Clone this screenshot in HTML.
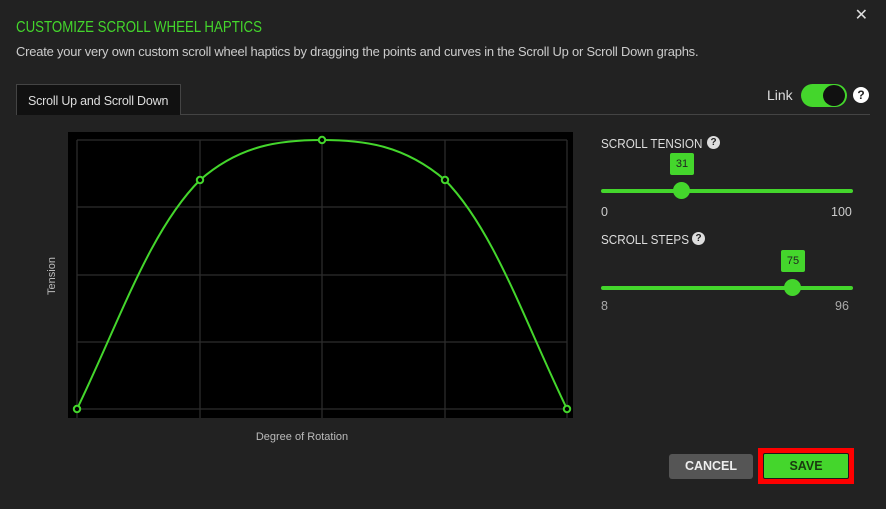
<!DOCTYPE html>
<html><head><meta charset="utf-8"><style>
*{margin:0;padding:0;box-sizing:border-box}
body{width:886px;height:509px;background:#222;font-family:"Liberation Sans",sans-serif;position:relative;overflow:hidden;color:#ccc}
.abs{position:absolute}
.title{left:16px;top:19px;color:#44d62c;font-size:16px;transform:scaleX(0.83);transform-origin:0 0;white-space:nowrap}
.desc{left:16px;top:45px;font-size:12.5px;color:#ccc;letter-spacing:-0.2px;transform:scaleX(1.035);transform-origin:0 0;white-space:nowrap}
.tab{left:16px;top:84px;width:165px;height:31px;background:#111;border:1px solid #444;border-bottom:none;font-size:12.5px;color:#ddd;padding:9px 0 0 11px;letter-spacing:-0.2px}
.tabline{left:181px;top:114px;width:689px;height:1px;background:#444}
.lbl{font-size:13px;color:#ddd;transform:scaleX(0.9);transform-origin:0 0;white-space:nowrap}
.q{width:13px;height:13px;border-radius:50%;background:#ddd;color:#222;font-size:10px;font-weight:bold;text-align:center;line-height:13px}
.track{height:4px;background:#44d62c;border-radius:2px}
.knob{width:17px;height:17px;border-radius:50%;background:#44d62c}
.bubble{width:24px;height:22px;background:#44d62c;border-radius:2px;color:#222;font-size:11px;text-align:center;line-height:22px}
.num{font-size:12.5px;color:#ccc}
</style></head><body>
<div class="abs" style="right:18px;top:5px;font-size:16px;color:#ddd">✕</div>
<div class="abs title">CUSTOMIZE SCROLL WHEEL HAPTICS</div>
<div class="abs desc">Create your very own custom scroll wheel haptics by dragging the points and curves in the Scroll Up or Scroll Down graphs.</div>
<div class="abs tab">Scroll Up and Scroll Down</div>
<div class="abs tabline"></div>
<div class="abs" style="left:767px;top:87px;font-size:14px;color:#ddd">Link</div>
<div class="abs" style="left:801px;top:84px;width:46px;height:23px;border-radius:12px;background:#44d62c"></div>
<div class="abs" style="left:823px;top:85px;width:22px;height:21px;border-radius:50%;background:#111"></div>
<div class="abs q" style="left:853px;top:87px;width:16px;height:16px;line-height:16px;font-size:12px;background:#fff">?</div>

<svg class="abs" style="left:0;top:0" width="600" height="450">
<rect x="68" y="132" width="505" height="286" fill="#000"/>
<g stroke="#2e2e2e" stroke-width="1.2">
<line x1="77" y1="140" x2="567" y2="140"/><line x1="77" y1="207" x2="567" y2="207"/><line x1="77" y1="275" x2="567" y2="275"/><line x1="77" y1="342" x2="567" y2="342"/><line x1="77" y1="409" x2="567" y2="409"/>
<line x1="77" y1="140" x2="77" y2="418"/><line x1="200" y1="140" x2="200" y2="418"/><line x1="322" y1="140" x2="322" y2="418"/><line x1="445" y1="140" x2="445" y2="418"/><line x1="567" y1="140" x2="567" y2="418"/>
</g>
<path d="M77 409 C120 320,150 230,200 180 C240 145,280 140,322 140 C364 140,404 145,445 180 C494 230,524 320,567 409" fill="none" stroke="#44d62c" stroke-width="2"/>
<g fill="#000" stroke="#44d62c" stroke-width="2">
<circle cx="77" cy="409" r="3.2"/><circle cx="200" cy="180" r="3.2"/><circle cx="322" cy="140" r="3.2"/><circle cx="445" cy="180" r="3.2"/><circle cx="567" cy="409" r="3.2"/>
</g>
<text x="302" y="440" fill="#bbb" font-size="11" text-anchor="middle" font-family="Liberation Sans">Degree of Rotation</text>
<text transform="translate(55,276) rotate(-90)" fill="#bbb" font-size="11" text-anchor="middle" font-family="Liberation Sans">Tension</text>
</svg>

<div class="abs lbl" style="left:601px;top:136px">SCROLL TENSION</div>
<div class="abs q" style="left:707px;top:136px">?</div>
<div class="abs bubble" style="left:670px;top:153px">31</div>
<div class="abs track" style="left:601px;top:189px;width:252px"></div>
<div class="abs knob" style="left:673px;top:182px"></div>
<div class="abs num" style="left:601px;top:205px">0</div>
<div class="abs num" style="left:831px;top:205px">100</div>

<div class="abs lbl" style="left:601px;top:232px">SCROLL STEPS</div>
<div class="abs q" style="left:692px;top:232px">?</div>
<div class="abs bubble" style="left:781px;top:250px">75</div>
<div class="abs track" style="left:601px;top:286px;width:252px"></div>
<div class="abs knob" style="left:784px;top:279px"></div>
<div class="abs num" style="left:601px;top:299px;color:#aaa">8</div>
<div class="abs num" style="left:835px;top:299px;color:#aaa">96</div>

<div class="abs" style="left:669px;top:454px;width:84px;height:25px;background:#555;border-radius:3px;color:#eee;font-size:12.5px;font-weight:bold;text-align:center;line-height:25px">CANCEL</div>
<div class="abs" style="left:758px;top:448px;width:96px;height:36px;background:#f00"></div>
<div class="abs" style="left:763px;top:453px;width:86px;height:26px;background:#44d62c;border:1px solid #1a1a1a;border-radius:2px;color:#1a3a10;font-size:12.5px;font-weight:bold;text-align:center;line-height:24px">SAVE</div>
</body></html>
